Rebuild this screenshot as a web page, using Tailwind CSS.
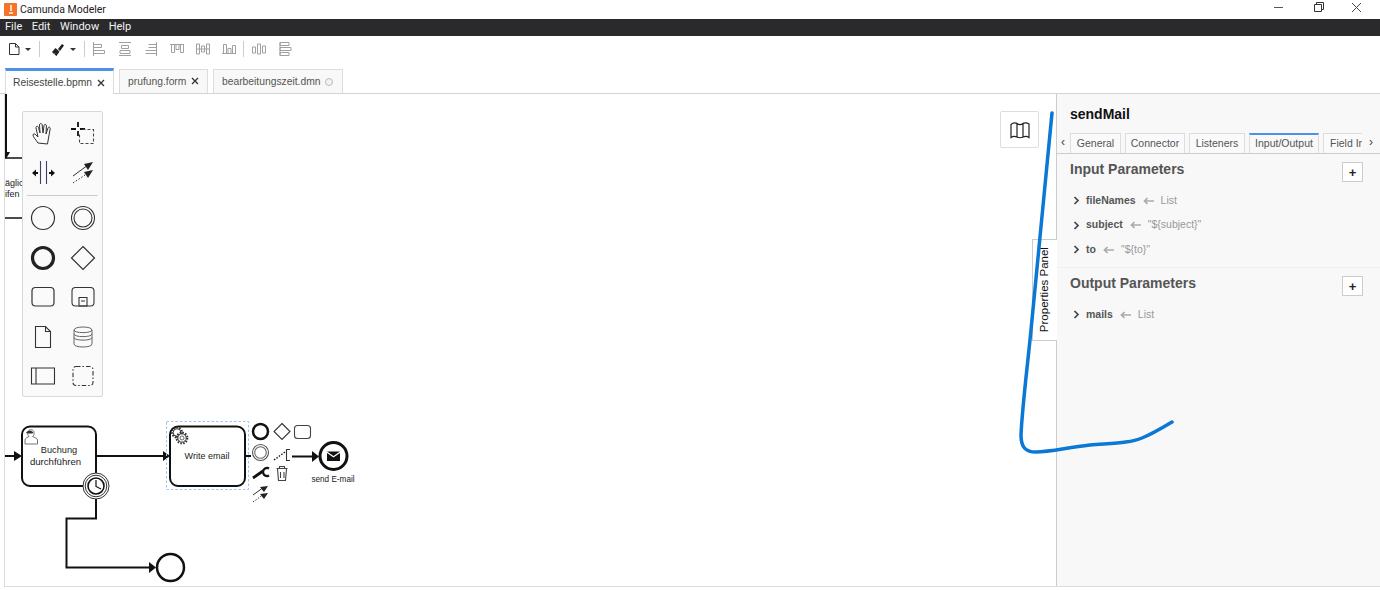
<!DOCTYPE html>
<html lang="en">
<head>
  <meta charset="UTF-8">
  <title>Camunda Modeler</title>
  <script src="https://cdn.jsdelivr.net/npm/@tailwindcss/browser@4"></script>
</head>
<body class="w-[1380px] h-[590px] overflow-hidden bg-white relative font-['Liberation_Sans',sans-serif] flex flex-col">

  <!-- Title bar -->
  <div class="h-[19px] flex items-center bg-white shrink-0">
    <div class="w-[13px] h-[13px] ml-[4px] bg-[#f4742b] rounded-[1px] flex flex-col items-center justify-center gap-[1px]">
      <div class="w-[2px] h-[6px] bg-[#ffd9b8]"></div>
      <div class="w-[4px] h-[2px] bg-[#ffd9b8]"></div>
    </div>
    <span class="ml-[3px] text-[10.500px] text-[#222] font-['Roboto',sans-serif]">Camunda Modeler</span>
    <div class="ml-auto flex items-start self-start">
      <svg width="40" height="14" viewBox="0 0 40 14" class="mr-[-1px]"><path d="M15 7.500h9" stroke="#555" stroke-width="1"/></svg>
      <svg width="40" height="14" viewBox="0 0 40 14"><path d="M16.500 4.500h7v7h-7zM18.500 4.500v-2h7v7h-2" fill="none" stroke="#333" stroke-width="1"/></svg>
      <svg width="42" height="14" viewBox="0 0 42 14"><path d="M14 3l9 9M23 3l-9 9" stroke="#444" stroke-width="1"/></svg>
    </div>
  </div>

  <!-- Menu bar -->
  <div class="h-[17px] bg-[#2a2a2c] flex items-center gap-[9.500px] pl-[5px] text-[11px] text-[#f2f2f2] font-['Roboto',sans-serif] shrink-0">
    <span>File</span><span>Edit</span><span>Window</span><span>Help</span>
  </div>

  <!-- Toolbar -->
  <div class="h-[31px] flex items-center pl-[7px] pb-[5px] bg-white shrink-0">
    <svg width="14" height="14" viewBox="0 0 14 14"><path d="M2.500 1.500h6l3.500 3.500v7.500h-9.500zM8.500 1.500v3.500h3.500" fill="none" stroke="#333"/></svg>
    <svg class="ml-[3px]" width="8" height="5" viewBox="0 0 8 5"><path d="M1 1h6l-3 3z" fill="#333"/></svg>
    <div class="w-px h-[16px] bg-[#ccc] ml-[7px]"></div>
    <svg class="ml-[10px]" width="15" height="15" viewBox="0 0 15 15"><path d="M8 7l4-5 2 1.500-4 5.500z" fill="#222"/><path d="M2 10l3.500-4 4 3.500-3 4.500-2-1.500 1-1.500-1.500 1z" fill="#222"/></svg>
    <svg class="ml-[4px]" width="8" height="5" viewBox="0 0 8 5"><path d="M1 1h6l-3 3z" fill="#333"/></svg>
    <div class="w-px h-[16px] bg-[#ccc] ml-[7px]"></div>
    <div class="flex items-center ml-[7px] gap-[12px] text-[#a0a0a0]">
      <svg width="14" height="14" viewBox="0 0 14 14" fill="none" stroke="currentColor"><path d="M1.500 0v14M1.500 2.500h8v3h-8M1.500 8.500h11v3h-11"/></svg>
      <svg width="14" height="14" viewBox="0 0 14 14" fill="none" stroke="currentColor"><path d="M1 .5h12M1 13.500h12M3.500 3.500h7v3h-7zM2 8.500h10v3h-10z"/></svg>
      <svg width="14" height="14" viewBox="0 0 14 14" fill="none" stroke="currentColor"><path d="M12.500 0v14M4.500 2.500h8v3h-8M1.500 8.500h11v3h-11"/></svg>
      <svg width="14" height="14" viewBox="0 0 14 14" fill="none" stroke="currentColor"><path d="M0 2.500h14M1.500 2.500v8h3v-8M6 2.500v5h3v-5M10.500 2.500v8h3v-8"/></svg>
      <svg width="14" height="14" viewBox="0 0 14 14" fill="none" stroke="currentColor"><path d="M.5 2h3v10h-3zM10.500 2h3v10h-3zM5.500 4h3v6h-3zM0 7h14"/></svg>
      <svg width="14" height="14" viewBox="0 0 14 14" fill="none" stroke="currentColor"><path d="M0 11.500h14M1.500 11.500v-9h3v9M6 11.500v-5h3v5M10.500 11.500v-8h3v8"/></svg>
    </div>
    <div class="w-px h-[16px] bg-[#ccc] ml-[7px]"></div>
    <div class="flex items-center ml-[8px] gap-[12px] text-[#a0a0a0]">
      <svg width="14" height="14" viewBox="0 0 14 14" fill="none" stroke="currentColor"><path d="M.5 5h3v6h-3zM5.500 2h3v10h-3zM10.500 4h3v7h-3z"/></svg>
      <svg width="14" height="14" viewBox="0 0 14 14" fill="none" stroke="currentColor"><path d="M2 .5h9v3h-9zM2 5.500h11v3h-11zM2 10.500h9v3h-9zM2 .5v13"/></svg>
    </div>
  </div>

  <!-- File tabs -->
  <div class="h-[27px] flex items-end gap-[5px] pl-[5px] text-[10.300px] shrink-0 border-b border-[#d4d4d4]">
    <div class="w-[109px] h-[26px] mb-[-1px] bg-white border-t-[3px] border-t-[#4d90e8] border-x border-x-[#ddd] flex items-center pl-[7px] text-[#444] relative">
      Reisestelle.bpmn
      <svg class="absolute left-[91px] top-[8px]" width="8" height="8" viewBox="0 0 8 8"><path d="M1 1l6 6M7 1l-6 6" stroke="#333" stroke-width="1.300"/></svg>
    </div>
    <div class="w-[89px] h-[24px] bg-[#f8f8f8] border border-[#ddd] border-b-0 flex items-center pl-[8px] text-[#555] relative">
      prufung.form
      <svg class="absolute left-[71px] top-[7px]" width="8" height="8" viewBox="0 0 8 8"><path d="M1 1l6 6M7 1l-6 6" stroke="#333" stroke-width="1.300"/></svg>
    </div>
    <div class="w-[130px] h-[24px] bg-[#f8f8f8] border border-[#ddd] border-b-0 flex items-center pl-[8px] text-[#555] relative">
      bearbeitungszeit.dmn
      <span class="absolute left-[111px] top-[8px] w-[8px] h-[8px] rounded-full border border-[#bbb] bg-[#f2f2f2]"></span>
    </div>
  </div>

  <!-- Main area -->
  <div class="flex h-[493px] ml-[4px] border-l border-b border-[#dcdcdc] shrink-0">

    <!-- Canvas -->
    <div class="w-[1051px] relative bg-white shrink-0">
      <svg class="absolute inset-0" width="1051" height="492" viewBox="5 94 1051 492" font-family="Liberation Sans, sans-serif" font-size="9.600" fill="#222">
        <!-- partial elements cut by the left edge -->
        <path d="M6 94V152" stroke="#111" stroke-width="2" fill="none"/>
        <path d="M2 152h8l-4 7z" fill="#111"/>
        <path d="M5 158H24M5 218H24" stroke="#111" stroke-width="1.500" fill="none"/>
        <text x="5" y="186" font-size="9">äglic</text>
        <text x="5" y="197" font-size="9">ifen</text>

        <!-- Buchung durchführen -->
        <path d="M5 456H15" stroke="#111" stroke-width="2"/>
        <path d="M14 451l8 5-8 5z" fill="#111"/>
        <rect x="22" y="426.500" width="74" height="59.500" rx="8" fill="#fff" stroke="#111" stroke-width="2"/>
        <path d="M25 444v-4c0-2 3-3 4-3.500-1.500-1-2-5 .5-6.500 2.500-1 5 .5 4.500 3.500 0 1.500-.5 2.500-1.500 3 1 .5 5 1.500 5 3.500v4z" fill="#fff" stroke="#666" stroke-width=".900"/>
        <path d="M26 433c1.500-3.500 6-3.500 7.500 0-2 .8-5 .8-7.500 0z" fill="#333"/>
        <text x="59" y="453" text-anchor="middle" font-size="9.200">Buchung</text>
        <text x="55.500" y="464.500" text-anchor="middle">durchführen</text>

        <path d="M96 456H164" stroke="#111" stroke-width="2" fill="none"/>
        <path d="M163 451l7 5-7 5z" fill="#111"/>

        <!-- Boundary timer -->
        <path d="M96 499V518.500H66.500V567.500H149" stroke="#111" stroke-width="2" fill="none"/>
        <path d="M149 562l7 5.500-7 5.500z" fill="#111"/>
        <circle cx="96" cy="486" r="13" fill="#fff" stroke="#333" stroke-width="1"/>
        <circle cx="96" cy="486" r="10.800" fill="#fff" stroke="#333" stroke-width="1"/>
        <circle cx="96" cy="486" r="8" fill="#fff" stroke="#111" stroke-width="1.600"/>
        <path d="M96 480V486.500L101 489" stroke="#111" stroke-width="1.200" fill="none"/>

        <circle cx="170.500" cy="567.500" r="13.500" fill="#fff" stroke="#111" stroke-width="2.500"/>

        <!-- Write email -->
        <rect x="166.500" y="421.500" width="82" height="68" fill="none" stroke="#9dc3f5" stroke-width="1" stroke-dasharray="2.500 2"/>
        <rect x="170" y="426.500" width="75" height="59.500" rx="8" fill="#fff" stroke="#111" stroke-width="2"/>
        <circle cx="177" cy="432.500" r="3.800" fill="#fff" stroke="#333" stroke-width="1"/>
        <circle cx="177" cy="432.500" r="5" fill="none" stroke="#333" stroke-width="2" stroke-dasharray="1.500 1.300"/>
        <circle cx="182" cy="438" r="4.200" fill="#fff" stroke="#333" stroke-width="1"/>
        <circle cx="182" cy="438" r="5.400" fill="none" stroke="#333" stroke-width="2" stroke-dasharray="1.500 1.300"/>
        <circle cx="182" cy="438" r="2" fill="#fff" stroke="#444" stroke-width=".800"/>
        <text x="207" y="459" text-anchor="middle" font-size="9">Write email</text>
        <path d="M245 456H251" stroke="#111" stroke-width="2"/>

        <!-- Context pad -->
        <circle cx="260.500" cy="431.500" r="7.500" fill="#fff" stroke="#111" stroke-width="2.500"/>
        <path d="M282 423.500l8 8-8 8-8-8z" fill="#fff" stroke="#333" stroke-width="1.100"/>
        <rect x="294.500" y="425.500" width="16" height="13" rx="3" fill="#fff" stroke="#444" stroke-width="1.100"/>
        <circle cx="260.500" cy="452.500" r="8" fill="#fff" stroke="#555" stroke-width="1.100"/>
        <circle cx="260.500" cy="452.500" r="5.800" fill="#fff" stroke="#666" stroke-width="1.100"/>
        <path d="M274 460L285 452" stroke="#111" stroke-width="1.300" stroke-dasharray="1.500 1.500"/>
        <path d="M290 449.500H286.500V460.500H290" stroke="#333" stroke-width="1.100" fill="none"/>
        <path d="M253 478L263 471" stroke="#111" stroke-width="2.800"/>
        <path d="M269 468.500a4 4 0 1 0 0 7" stroke="#111" stroke-width="2.200" fill="none"/>
        <path d="M276.500 468.500h11M279.500 468v-1.500h5v1.500M277.500 469l1 11.500h7l1-11.500M280.500 472v6M284 472v6" stroke="#444" stroke-width="1.100" fill="none"/>
        <path d="M253 495l11-8" stroke="#333" stroke-width="1"/>
        <path d="M260 487l8-1-4 6z" fill="#222"/>
        <path d="M253 502l11-8" stroke="#333" stroke-width="1" stroke-dasharray="1.500 1.500"/>
        <path d="M260 494l8-1-4 6z" fill="#222"/>

        <!-- send E-mail -->
        <path d="M292 456.500H312" stroke="#111" stroke-width="2"/>
        <path d="M312 451l7 5.500-7 5.500z" fill="#111"/>
        <circle cx="333.500" cy="456" r="13.500" fill="#fff" stroke="#111" stroke-width="3"/>
        <path d="M327 451.500h13l-6.500 4.500zM327 453l6.500 4.500 6.500-4.500v8h-13z" fill="#111"/>
        <text x="333" y="482" text-anchor="middle" font-size="8.200">send E-mail</text>
      </svg>

      <!-- Palette -->
      <div class="absolute left-[17px] top-[17px] w-[81px] h-[286px] bg-[#fafafa] border border-[#d8d8d8] rounded-[2px] flex flex-col items-center text-[#333]">
        <div class="grid grid-cols-[40px_40px] mt-px">
          <svg width="40" height="40" viewBox="0 0 40 40" fill="none" stroke="currentColor" stroke-width="1"><path d="M15 30C13 27 10 24 10 22C10 20.500 12 20.500 13 22L15 24L13 15C12.700 13 15 12.500 15.500 14.500L17 20L16.500 12C16.400 10 19 10 19.200 12L20 20L21 12.500C21.300 11 23.500 11 23.400 13L23 21L25 15C25.500 13.500 27.500 14 27.200 15.800L25.500 25C25 27 25 29 24.500 31Z"/></svg>
          <svg width="40" height="40" viewBox="0 0 40 40" fill="none"><path d="M15 9v5M15 18v5M8 16h5M17 16h5" stroke="#111" stroke-width="1.800"/><path d="M19.500 16.500h11v14h-14v-11" stroke="#444" stroke-width="1.100" stroke-dasharray="3 2"/></svg>
          <svg width="40" height="40" viewBox="0 0 40 40" fill="none"><path d="M17.500 8v23" stroke="#4a3a6a" stroke-width="1.100"/><path d="M23.500 8v23" stroke="#4a3a6a" stroke-width="1.100"/><path d="M9 20l4-3.500v2.500h2v2h-2v2.500zM32 20l-4-3.500v2.500h-2v2h2v2.500z" fill="#111"/></svg>
          <svg width="40" height="40" viewBox="0 0 40 40" fill="none"><path d="M10 23L25 12" stroke="#333" stroke-width="1"/><path d="M21 11l9-2-5 8z" fill="#222"/><path d="M10 30L25 20" stroke="#333" stroke-width="1" stroke-dasharray="1.500 1.800"/><path d="M21 19l9-2-5 8z" fill="#222"/></svg>
        </div>
        <div class="w-[71px] h-px bg-[#ccc] my-[2px]"></div>
        <div class="grid grid-cols-[40px_40px] auto-rows-[39.500px]">
          <svg width="40" height="40" viewBox="0 0 40 40" fill="none" stroke="currentColor" stroke-width="1.200"><circle cx="20" cy="20" r="11.500"/></svg>
          <svg width="40" height="40" viewBox="0 0 40 40" fill="none" stroke="currentColor" stroke-width="1.100"><circle cx="20" cy="20" r="11.500"/><circle cx="20" cy="20" r="9"/></svg>
          <svg width="40" height="40" viewBox="0 0 40 40" fill="none" stroke="#222" stroke-width="3.200"><circle cx="20" cy="20" r="10.500"/></svg>
          <svg width="40" height="40" viewBox="0 0 40 40" fill="none" stroke="currentColor" stroke-width="1.200"><path d="M20 8.500L31.500 20L20 31.500L8.500 20Z"/></svg>
          <svg width="40" height="40" viewBox="0 0 40 40" fill="none" stroke="currentColor" stroke-width="1.200"><rect x="9" y="10.500" width="22" height="18.500" rx="3.500"/></svg>
          <svg width="40" height="40" viewBox="0 0 40 40" fill="none" stroke="currentColor" stroke-width="1.100"><rect x="9" y="10.500" width="22" height="18.500" rx="3.500"/><path d="M16 20.500h8v8.500h-8zM18 24h4"/></svg>
          <svg width="40" height="40" viewBox="0 0 40 40" fill="none" stroke="currentColor" stroke-width="1.100"><path d="M12.500 9.500h10l5 5v16h-15zM22.500 9.500v5h5"/></svg>
          <svg width="40" height="40" viewBox="0 0 40 40" fill="none" stroke="#666" stroke-width="1"><path d="M11 13c0-4 18-4 18 0v14c0 4-18 4-18 0zM11 13c0 3.500 18 3.500 18 0M11 17c0 3.500 18 3.500 18 0M11 20.500c0 3.500 18 3.500 18 0"/></svg>
          <svg width="40" height="40" viewBox="0 0 40 40" fill="none" stroke="currentColor" stroke-width="1.100"><path d="M8.500 12h23v16h-23zM13 12v16"/></svg>
          <svg width="40" height="40" viewBox="0 0 40 40" fill="none" stroke="currentColor" stroke-width="1.100"><rect x="10" y="10.500" width="20" height="19" rx="3" stroke-dasharray="4.500 2 1.500 2"/></svg>
        </div>
      </div>

      <!-- Minimap toggle -->
      <div class="absolute left-[995px] top-[17px] w-[39px] h-[37px] bg-white border border-[#ddd] rounded-[2px] flex items-center justify-center">
        <svg width="20" height="18" viewBox="0 0 20 18" fill="none" stroke="#222" stroke-width="1.200"><path d="M1 3.500C3 1.500 5 1.500 7 2.500V16C5 15 3 15 1 16.500ZM7 2.500C9 4 11 4 13 2.500V16C11 17 9 17 7 16ZM13 2.500C15 1.500 17 1.500 19 3V16.500C17 15 15 15 13 16Z"/></svg>
      </div>

      <!-- Properties panel toggle -->
      <div class="absolute left-[1027px] top-[145px] w-[25px] h-[102px] bg-white border border-r-0 border-[#ccc] flex items-center justify-center">
        <span class="whitespace-nowrap -rotate-90 text-[11.500px] text-[#111]">Properties Panel</span>
      </div>
    </div>

    <!-- Properties panel -->
    <div class="flex-1 bg-[#f8f8f8] border-l border-[#ccc]">
      <div class="h-[39px] pl-[13px] flex items-end pb-[12px] text-[14px] font-bold text-[#111] leading-none">sendMail</div>

      <div class="relative h-[21px] border-b border-[#ccc] flex gap-[4px] pl-[13px] pr-[18px] overflow-hidden text-[10.500px] text-[#555]">
        <span class="absolute left-[4px] top-[3px] text-[12px] leading-none text-[#444]">‹</span>
        <div class="w-[51px] shrink-0 border border-b-0 border-[#ddd] bg-[#fafafa] flex items-center justify-center">General</div>
        <div class="w-[60px] shrink-0 border border-b-0 border-[#ddd] bg-[#fafafa] flex items-center justify-center">Connector</div>
        <div class="w-[56px] shrink-0 border border-b-0 border-[#ddd] bg-[#fafafa] flex items-center justify-center">Listeners</div>
        <div class="w-[70px] shrink-0 border-t-[2px] border-x border-t-[#4d90e8] border-x-[#ddd] bg-[#f8f8f8] flex items-center justify-center">Input/Output</div>
        <div class="w-[39px] shrink-0 border border-b-0 border-r-0 border-[#ddd] bg-[#fafafa] pl-[6px] flex items-center overflow-hidden whitespace-nowrap">Field In</div>
        <span class="absolute right-[7px] top-[3px] text-[12px] leading-none text-[#444] bg-[#f8f8f8] pl-[2px]">›</span>
      </div>

      <div class="h-[114px] border-b border-[#efefef] pl-[13px] pr-[18px] text-[#555]">
        <div class="h-[31px] flex items-start justify-between pt-[8px]">
          <span class="text-[14px] font-bold leading-none">Input Parameters</span>
          <div class="w-[21px] h-[20px] border border-[#ccc] bg-white flex items-center justify-center text-[13px] font-bold text-[#222] leading-none mr-[-1px]">+</div>
        </div>
        <div class="flex flex-col gap-[7.500px] text-[10.500px] pt-[7px] pl-[3px]">
          <div class="h-[17px] flex items-center gap-[6px]">
            <svg width="7" height="9" viewBox="0 0 7 9" fill="none" stroke="#444" stroke-width="1.700"><path d="M1.500 1L5 4.500 1.500 8"/></svg>
            <b>fileNames</b>
            <svg class="mx-[1px]" width="11" height="8" viewBox="0 0 11 8" fill="none" stroke="#aaa" stroke-width="1.700"><path d="M11 4H1.500M4.500 1L1.500 4l3 3"/></svg>
            <span class="text-[#999]">List</span>
          </div>
          <div class="h-[17px] flex items-center gap-[6px]">
            <svg width="7" height="9" viewBox="0 0 7 9" fill="none" stroke="#444" stroke-width="1.700"><path d="M1.500 1L5 4.500 1.500 8"/></svg>
            <b>subject</b>
            <svg class="mx-[1px]" width="11" height="8" viewBox="0 0 11 8" fill="none" stroke="#aaa" stroke-width="1.700"><path d="M11 4H1.500M4.500 1L1.500 4l3 3"/></svg>
            <span class="text-[#999]">"${subject}"</span>
          </div>
          <div class="h-[17px] flex items-center gap-[6px]">
            <svg width="7" height="9" viewBox="0 0 7 9" fill="none" stroke="#444" stroke-width="1.700"><path d="M1.500 1L5 4.500 1.500 8"/></svg>
            <b>to</b>
            <svg class="mx-[1px]" width="11" height="8" viewBox="0 0 11 8" fill="none" stroke="#aaa" stroke-width="1.700"><path d="M11 4H1.500M4.500 1L1.500 4l3 3"/></svg>
            <span class="text-[#999]">"${to}"</span>
          </div>
        </div>
      </div>

      <div class="pl-[13px] pr-[18px] text-[#555]">
        <div class="h-[31px] flex items-start justify-between pt-[8px]">
          <span class="text-[14px] font-bold leading-none">Output Parameters</span>
          <div class="w-[21px] h-[20px] border border-[#ccc] bg-white flex items-center justify-center text-[13px] font-bold text-[#222] leading-none mr-[-1px]">+</div>
        </div>
        <div class="flex flex-col text-[10.500px] pt-[7px] pl-[3px]">
          <div class="h-[17px] flex items-center gap-[6px]">
            <svg width="7" height="9" viewBox="0 0 7 9" fill="none" stroke="#444" stroke-width="1.700"><path d="M1.500 1L5 4.500 1.500 8"/></svg>
            <b>mails</b>
            <svg class="mx-[1px]" width="11" height="8" viewBox="0 0 11 8" fill="none" stroke="#aaa" stroke-width="1.700"><path d="M11 4H1.500M4.500 1L1.500 4l3 3"/></svg>
            <span class="text-[#999]">List</span>
          </div>
        </div>
      </div>
    </div>
  </div>

  <!-- Hand-drawn blue annotation on top of the screenshot -->
  <svg class="absolute inset-0 pointer-events-none" width="1380" height="590" viewBox="0 0 1380 590" fill="none">
    <path d="M1052 113L1031 330C1027 370 1022 410 1021 435C1021 448 1026 452 1036 452C1050 452 1065 448 1090 445C1115 443 1130 443 1142 438C1152 434 1162 428 1172 422" stroke="#0b78d6" stroke-width="3.500" stroke-linecap="round"/>
  </svg>
</body>
</html>
